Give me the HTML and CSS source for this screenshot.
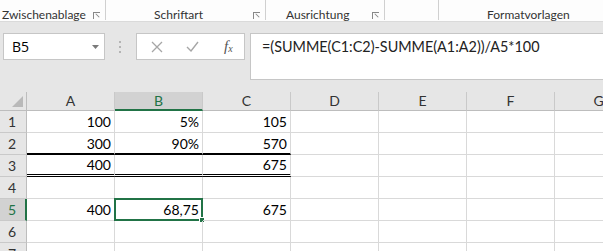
FILE: index.html
```html
<!DOCTYPE html>
<html lang="de">
<head>
    <meta charset="UTF-8">
    <title>Mappe1 - Excel</title>
    <link rel="stylesheet" href="styles.css">
</head>
<body>
    <div class="ribbon">
        <div class="group g-clip"><span class="label">Zwischenablage</span><span class="launcher"></span></div>
        <div class="group g-font"><span class="label">Schriftart</span><span class="launcher"></span></div>
        <div class="group g-align"><span class="label">Ausrichtung</span><span class="launcher"></span></div>
        <div class="group g-num"></div>
        <div class="group g-styles"><span class="label">Formatvorlagen</span></div>
    </div>

    <div class="formula-area">
        <div class="namebox">
            <span>B5</span>
            <svg class="caret" width="7" height="4" viewBox="0 0 7 4"><path d="M0 0h7L3.5 4z" fill="#7a7a7a"/></svg>
        </div>
        <div class="grip"><i></i><i></i><i></i></div>
        <div class="fbuttons">
            <svg width="12" height="12" viewBox="0 0 12 12"><path d="M1 1l10 10M11 1L1 11" stroke="#a6a6a6" stroke-width="1.3"/></svg>
            <svg width="13" height="11" viewBox="0 0 13 11"><path d="M1 6l4 4 7-9" stroke="#a6a6a6" stroke-width="1.4" fill="none"/></svg>
            <span class="fx">f<span class="fx-x">x</span></span>
        </div>
        <div class="formula">=(SUMME(C1:C2)-SUMME(A1:A2))/A5*100</div>
    </div>

    <div class="sheet">
        <div class="corner"></div>
        <div class="colhead">A</div>
        <div class="colhead active">B</div>
        <div class="colhead">C</div>
        <div class="colhead">D</div>
        <div class="colhead">E</div>
        <div class="colhead">F</div>
        <div class="colhead">G</div>

        <div class="rowhead">1</div>
        <div class="cell">100</div><div class="cell">5%</div><div class="cell">105</div>
        <div class="cell"></div><div class="cell"></div><div class="cell"></div><div class="cell"></div>

        <div class="rowhead">2</div>
        <div class="cell thick">300</div><div class="cell thick">90%</div><div class="cell thick">570</div>
        <div class="cell"></div><div class="cell"></div><div class="cell"></div><div class="cell"></div>

        <div class="rowhead">3</div>
        <div class="cell double">400</div><div class="cell double"></div><div class="cell double">675</div>
        <div class="cell"></div><div class="cell"></div><div class="cell"></div><div class="cell"></div>

        <div class="rowhead">4</div>
        <div class="cell"></div><div class="cell"></div><div class="cell"></div>
        <div class="cell"></div><div class="cell"></div><div class="cell"></div><div class="cell"></div>

        <div class="rowhead active">5</div>
        <div class="cell">400</div><div class="cell selected">68,75<span class="handle"></span></div><div class="cell">675</div>
        <div class="cell"></div><div class="cell"></div><div class="cell"></div><div class="cell"></div>

        <div class="rowhead">6</div>
        <div class="cell"></div><div class="cell"></div><div class="cell"></div>
        <div class="cell"></div><div class="cell"></div><div class="cell"></div><div class="cell"></div>

        <div class="rowhead">7</div>
        <div class="cell"></div><div class="cell"></div><div class="cell"></div>
        <div class="cell"></div><div class="cell"></div><div class="cell"></div><div class="cell"></div>
    </div>
</body>
</html>
```

FILE: styles.css
```css
* {
    box-sizing: border-box;
}
body {
    margin: 0;
    width: 603px;
    height: 251px;
    overflow: hidden;
    background: #e6e6e6;
    font-family: "Open Sans", "Noto Sans", sans-serif;
    color: #000;
}

/* ribbon group labels */
.ribbon {
    display: flex;
    height: 22px;
    background: #fdfdfd;
    border-bottom: 1px solid #dadada;
}
.ribbon .group {
    position: relative;
    height: 20px;
    border-right: 1px solid #d0d0d0;
    font-family: "Lato", sans-serif;
    font-size: 12px;
    line-height: 12px;
    color: #333;
}
.ribbon .label {
    display: block;
    padding-top: 9px;
    white-space: nowrap;
}
.g-clip {
    width: 106px;
    padding-left: 2px;
}
.g-font {
    width: 160px;
    padding-left: 48px;
}
.g-align {
    width: 119px;
    padding-left: 20px;
}
.g-num {
    width: 54px;
}
.g-styles {
    flex: 1;
    border-right: none !important;
    padding-left: 48px;
}
.launcher {
    position: absolute;
    right: 5px;
    top: 12px;
    width: 7px;
    height: 7px;
    border-left: 1px solid #888;
    border-top: 1px solid #888;
}
.launcher::after {
    content: "";
    position: absolute;
    left: 1px;
    top: 2px;
    width: 5px;
    height: 1px;
    background: #888;
    transform: rotate(45deg);
}

/* formula bar */
.formula-area {
    display: flex;
    align-items: flex-start;
    height: 70px;
    padding: 11px 0 0 3px;
}
.namebox {
    display: flex;
    align-items: center;
    justify-content: space-between;
    width: 102px;
    height: 27px;
    padding: 0 5px 0 8px;
    background: #fff;
    border: 1px solid #c6c6c6;
    font-size: 14px;
}
.grip {
    display: flex;
    flex-direction: column;
    gap: 3px;
    margin: 8px 14px 0 14px;
}
.grip i {
    width: 2px;
    height: 2px;
    background: #b4b4b4;
}
.fbuttons {
    display: flex;
    align-items: center;
    gap: 23px;
    width: 109px;
    height: 27px;
    padding-left: 14px;
    margin-left: 1px;
    background: #fff;
    border: 1px solid #c6c6c6;
}
.fx {
    margin-left: 2px;
    font-family: "Liberation Serif", serif;
    font-style: italic;
    font-size: 15px;
    color: #555;
}
.fx-x {
    font-size: 10px;
    position: relative;
    top: 1px;
}
.formula {
    flex: 1;
    height: 47px;
    margin-left: 5px;
    margin-right: -10px;
    padding: 4px 0 0 11px;
    background: #fff;
    border: 1px solid #c6c6c6;
    font-family: "Lato", sans-serif;
    font-size: 14.4px;
    color: #222;
}

/* sheet grid */
.sheet {
    display: grid;
    grid-template-columns: 27px repeat(7, 88px);
    grid-template-rows: 19px repeat(7, 22px);
    background: #fff;
    font-family: "Lato", sans-serif;
    font-size: 14px;
}
.corner {
    position: relative;
    background: #e6e6e6;
    border-right: 1px solid #bdbdbd;
    border-bottom: 1px solid #bdbdbd;
}
.corner::after {
    content: "";
    position: absolute;
    right: 3px;
    bottom: 3px;
    border-left: 11px solid transparent;
    border-bottom: 11px solid #b9b9b9;
}
.colhead {
    background: #e6e6e6;
    border-right: 1px solid #c9c9c9;
    border-bottom: 1px solid #bdbdbd;
    text-align: center;
    line-height: 18px;
    color: #333;
}
.colhead.active {
    background: #d2d2d2;
    color: #217346;
    border-bottom: 2px solid #217346;
}
.rowhead {
    background: #e6e6e6;
    border-right: 1px solid #bdbdbd;
    border-bottom: 1px solid #c9c9c9;
    padding-left: 8px;
    line-height: 21px;
    color: #333;
}
.rowhead.active {
    background: #d2d2d2;
    color: #217346;
    border-right: 2px solid #217346;
}
.cell {
    position: relative;
    border-right: 1px solid #d9d9d9;
    border-bottom: 1px solid #d9d9d9;
    text-align: right;
    padding-right: 3px;
    line-height: 21px;
}
.cell.thick {
    border-bottom: 2px solid #000;
}
.cell.double {
    border-bottom: 3px double #000;
    line-height: 19px;
}
.cell.selected {
    margin: -1px 0 0 -1px;
    border: 2px solid #217346;
    line-height: 19px;
    padding-right: 2px;
}
.handle {
    position: absolute;
    right: -4px;
    bottom: -4px;
    width: 6px;
    height: 6px;
    background: #217346;
    border: 1px solid #fff;
}
```
